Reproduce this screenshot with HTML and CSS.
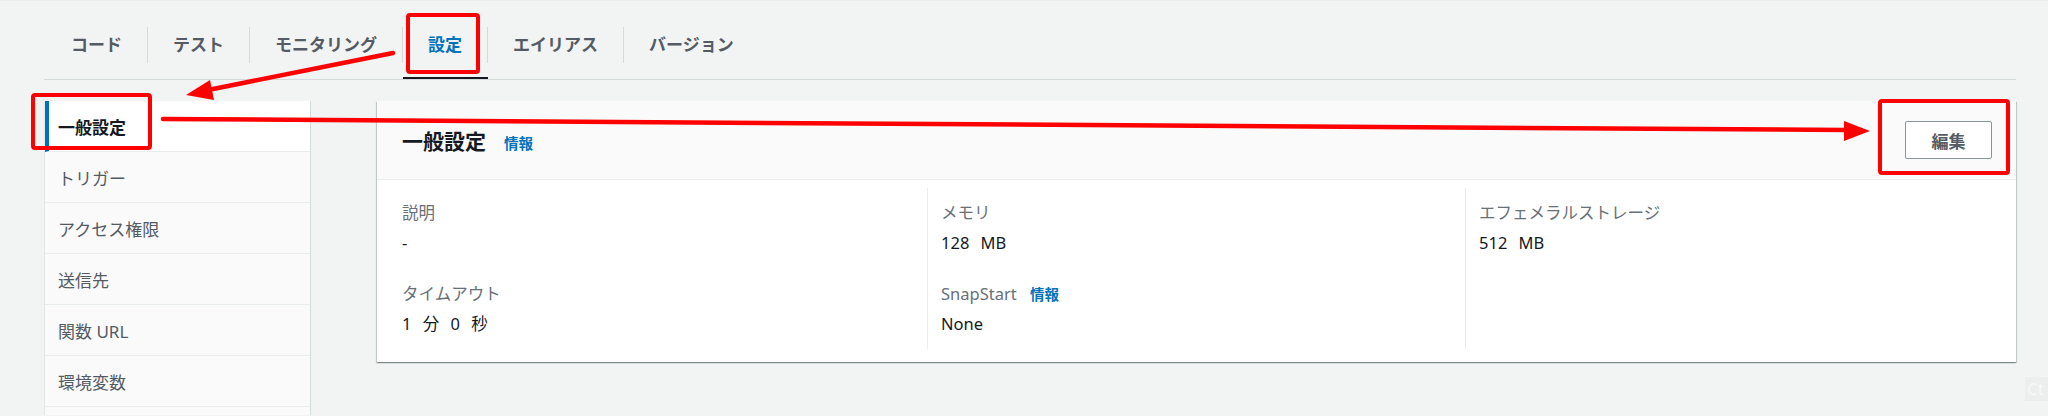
FILE: index.html
```html
<!DOCTYPE html>
<html lang="ja">

<head>
    <meta charset="UTF-8">
    <title>設定 - 一般設定</title>
    <link rel="stylesheet" href="styles.css">
</head>

<body>
<div class="page">
    <nav class="tabs">
        <a class="tab">コード</a>
        <a class="tab">テスト</a>
        <a class="tab">モニタリング</a>
        <a class="tab active">設定</a>
        <a class="tab">エイリアス</a>
        <a class="tab">バージョン</a>
    </nav>

    <div class="content">
        <ul class="side-nav">
            <li class="active">一般設定</li>
            <li>トリガー</li>
            <li>アクセス権限</li>
            <li>送信先</li>
            <li>関数 URL</li>
            <li>環境変数</li>
            <li></li>
        </ul>

        <section class="card">
            <header class="card-header">
                <h2>一般設定</h2>
                <a class="info">情報</a>
                <button class="edit-button">編集</button>
            </header>
            <div class="card-body">
                <div class="col">
                    <div class="item">
                        <div class="label">説明</div>
                        <div class="value">-</div>
                    </div>
                    <div class="item">
                        <div class="label">タイムアウト</div>
                        <div class="value">1 分 0 秒</div>
                    </div>
                </div>
                <div class="col">
                    <div class="item">
                        <div class="label">メモリ</div>
                        <div class="value">128 MB</div>
                    </div>
                    <div class="item">
                        <div class="label">SnapStart <a class="info">情報</a></div>
                        <div class="value">None</div>
                    </div>
                </div>
                <div class="col">
                    <div class="item">
                        <div class="label">エフェメラルストレージ</div>
                        <div class="value">512 MB</div>
                    </div>
                </div>
            </div>
        </section>
    </div>

    <!-- annotation layer drawn over the screenshot -->
    <svg class="marks" width="2048" height="416" viewBox="0 0 2048 416">
        <g fill="none" stroke="#f00" stroke-width="4">
            <rect x="408" y="15" width="70" height="57" rx="2"/>
            <rect x="33" y="95" width="117" height="53" rx="2"/>
            <rect x="1880" y="101" width="128" height="72" rx="2"/>
        </g>
        <g stroke="#f00" stroke-width="4.5" stroke-linecap="round">
            <line x1="393" y1="53" x2="208" y2="90"/>
            <line x1="163" y1="119" x2="1846" y2="130"/>
        </g>
        <g fill="#f00">
            <polygon points="186,95 210,80 214,100"/>
            <polygon points="1844,121 1844,141 1870,131"/>
        </g>
    </svg>

    <div class="hint">Ct</div>
</div>
</body>
</html>
```

FILE: styles.css
```css
html,
body {
    margin: 0;
    height: 416px;
    overflow: hidden;
}

body {
    background-color: #f2f3f3;
    font-family: "Noto Sans", "Noto Sans CJK JP", sans-serif;
    color: #16191f;
    border-top: 1px solid #e9ebed;
    box-sizing: border-box;
}

.page {
    position: relative;
    padding: 0 32px 0 44px;
}

/* tabs */
.tabs {
    display: flex;
    align-items: flex-start;
    height: 78px;
    padding-left: 2px;
    border-bottom: 1px solid #d5dbdb;
}

.tab {
    position: relative;
    margin-top: 26px;
    height: 36px;
    line-height: 36px;
    padding: 0 25px;
    border-left: 1px solid #d5dbdb;
    font-size: 17px;
    font-weight: bold;
    color: #545b64;
    cursor: pointer;
}

.tab:first-child {
    border-left: none;
}

.tab.active {
    color: #0073bb;
}

.tab.active::after {
    content: "";
    position: absolute;
    left: 0;
    right: -1px;
    bottom: -16px;
    height: 2px;
    background-color: #16191f;
}

/* content */
.content {
    display: flex;
    align-items: flex-start;
    gap: 66px;
    margin-top: 21px;
}

.side-nav {
    list-style: none;
    margin: 0;
    padding: 0;
    width: 265px;
    flex-shrink: 0;
    border-left: 1px solid #e3e6e6;
    border-right: 1px solid #d5dbdb;
    background-color: #fafafa;
}

.side-nav li {
    display: flex;
    align-items: center;
    height: 50px;
    padding-left: 13px;
    border-bottom: 1px solid #eaeded;
    font-size: 17px;
    color: #545b64;
}

.side-nav li:last-child {
    height: 8px;
    border-bottom: none;
}

.side-nav li.active {
    padding-left: 9px;
    border-left: 4px solid #0073bb;
    background-color: #fff;
    color: #16191f;
    font-weight: bold;
}

.card {
    flex: 1;
    background-color: #fff;
    box-shadow: 0 1px 1px 0 rgba(0, 28, 36, 0.3), 1px 1px 1px 0 rgba(0, 28, 36, 0.15), -1px 1px 1px 0 rgba(0, 28, 36, 0.15);
}

.card-header {
    display: flex;
    align-items: center;
    height: 78px;
    padding: 0 24px 0 25px;
    background-color: #fafafa;
    border-bottom: 1px solid #eaeded;
}

.card-header h2 {
    margin: 0;
    font-size: 21px;
    font-weight: bold;
    color: #16191f;
}

.info {
    margin-left: 9px;
    font-size: 14.5px;
    font-weight: bold;
    color: #0073bb;
    cursor: pointer;
}

.card-header .info {
    margin-left: 18px;
    margin-top: 4px;
}

.edit-button {
    margin-left: auto;
    width: 87px;
    height: 38px;
    background-color: #fff;
    border: 1px solid #879596;
    border-radius: 2px;
    font-family: inherit;
    font-size: 17px;
    font-weight: bold;
    color: #545b64;
    cursor: pointer;
}

.card-body {
    display: grid;
    grid-template-columns: 525px 538px 1fr;
    padding: 8px 25px 13px;
}

.col {
    padding: 14px 0;
}

.col + .col {
    border-left: 1px solid #eaeded;
    padding-left: 13px;
}

.item + .item {
    margin-top: 29px;
}

.label {
    font-size: 16.5px;
    line-height: 22px;
    color: #687078;
}

.value {
    margin-top: 8px;
    font-size: 16.5px;
    line-height: 22px;
    color: #16191f;
    word-spacing: 7px;
}

/* overlays */
.marks {
    position: absolute;
    top: -1px;
    left: 0;
    pointer-events: none;
}

.hint {
    position: absolute;
    left: 2025px;
    top: 376px;
    width: 23px;
    height: 24px;
    line-height: 24px;
    padding-left: 2px;
    overflow: hidden;
    white-space: nowrap;
    background-color: #eceeee;
    color: #f7f8f8;
    font-size: 17px;
}
```
